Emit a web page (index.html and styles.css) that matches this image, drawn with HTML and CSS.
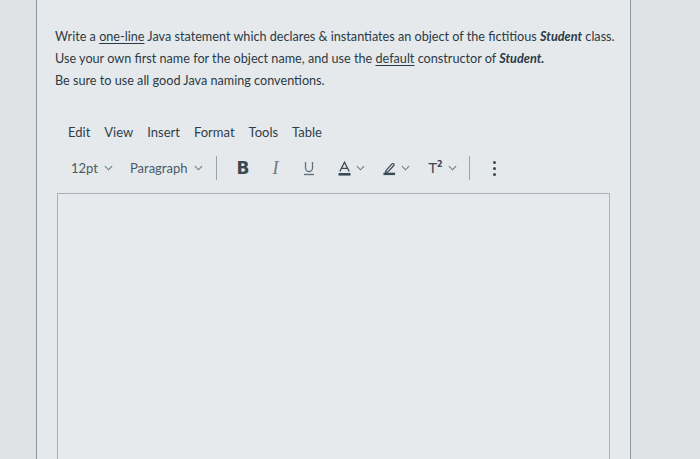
FILE: index.html
```html
<!DOCTYPE html>
<html>
<head>
<meta charset="utf-8">
<link rel="stylesheet" href="styles.css">
</head>
<body>
<div class="page">
  <div class="panel">
    <div class="question">
      <p>Write a <u>one-line</u> Java statement which declares &amp; instantiates an object of the fictitious <b><i>Student</i></b> class.</p>
      <p>Use your own first name for the object name, and use the <u>default</u> constructor of <b><i>Student.</i></b></p>
      <p>Be sure to use all good Java naming conventions.</p>
    </div>
    <div class="editor">
      <div class="menubar">
        <span>Edit</span><span>View</span><span>Insert</span><span>Format</span><span>Tools</span><span>Table</span>
      </div>
      <div class="toolbar">
        <div class="drop"><span>12pt</span><svg class="chev" viewBox="0 0 10 6"><path d="M1 1l4 4 4-4"/></svg></div>
        <div class="drop para"><span>Paragraph</span><svg class="chev" viewBox="0 0 10 6"><path d="M1 1l4 4 4-4"/></svg></div>
        <div class="sep"></div>
        <div class="btn bold">B</div>
        <div class="btn ital">I</div>
        <div class="btn und"><svg viewBox="0 0 12 15" width="12" height="15"><path d="M2.5 1v6a3.5 3.5 0 0 0 7 0V1" fill="none" stroke="#5f707d" stroke-width="1.3"/><path d="M1 13.5h10" stroke="#5f707d" stroke-width="1.4"/></svg></div>
        <div class="btn combo fore"><svg viewBox="0 0 13 15" width="13" height="15"><path d="M1.8 10.5L6.5 1.2l4.7 9.3M3.4 7.4h6.2" fill="none" stroke="#3a4a56" stroke-width="1.3"/><rect x="0.5" y="12" width="12" height="2.6" fill="#3a4a56"/></svg><svg class="chev" viewBox="0 0 10 6"><path d="M1 1l4 4 4-4"/></svg></div>
        <div class="btn combo hl"><svg viewBox="0 0 14 15" width="13" height="15"><path d="M3.2 9.8L9.6 2.6a1.3 1.3 0 0 1 2 1.7L5.3 11.2l-2.6.5z" fill="none" stroke="#3a4a56" stroke-width="1.3"/><rect x="0.5" y="12" width="12.5" height="2.6" fill="#3a4a56"/></svg><svg class="chev" viewBox="0 0 10 6"><path d="M1 1l4 4 4-4"/></svg></div>
        <div class="btn combo sup"><span class="t">T<sup>2</sup></span><svg class="chev" viewBox="0 0 10 6"><path d="M1 1l4 4 4-4"/></svg></div>
        <div class="sep sep2"></div>
        <div class="btn dots"><i></i><i></i><i></i></div>
      </div>
      <div class="area"></div>
    </div>
  </div>
</div>
</body>
</html>
```
FILE: styles.css
```css
html, body {
  margin: 0;
  padding: 0;
  background: #e0e3e6;
  height: 100%;
  overflow: hidden;
}
.page {
  padding-left: 36px;
  height: 459px;
  overflow: hidden;
}
.panel {
  width: 595px;
  height: 459px;
  background: #e6e9ec;
  border-left: 1px solid #8d97a1;
  border-right: 1px solid #8d97a1;
  box-sizing: border-box;
  font-family: Lato, "Liberation Sans", sans-serif;
  color: #2b3a45;
  padding-top: 26px;
  overflow: hidden;
}
.question {
  padding-left: 18px;
  font-size: 12.65px;
  line-height: 22px;
  white-space: nowrap;
}
.question p {
  margin: 0;
}
.question u {
  text-decoration-thickness: 1px;
  text-underline-offset: 2px;
}
.editor {
  margin-top: 31px;
  padding-left: 20px;
  padding-right: 20px;
}
.menubar {
  display: flex;
  gap: 14px;
  padding-left: 11px;
  font-size: 13px;
  line-height: 18px;
  color: #2f3e4a;
}
.toolbar {
  display: flex;
  align-items: center;
  height: 26px;
  margin-top: 14px;
  padding-left: 14px;
  color: #4a5b68;
  font-size: 13px;
}
.drop {
  display: flex;
  align-items: center;
  gap: 6px;
}
.para {
  margin-left: 17px;
}
.chev {
  width: 9px;
  height: 6px;
  fill: none;
  stroke: #6b7a86;
  stroke-width: 1.2;
  flex: none;
}
.sep {
  width: 1px;
  height: 24px;
  background: #9aa4ad;
  margin-left: 13px;
  margin-right: 20px;
}
.btn {
  display: flex;
  align-items: center;
  justify-content: center;
}
.bold {
  font-family: "DejaVu Sans", sans-serif;
  font-weight: bold;
  font-size: 17px;
  color: #3a4852;
  line-height: 1;
}
.ital {
  font-family: "Liberation Serif", serif;
  font-style: italic;
  font-size: 18px;
  color: #6b7985;
  line-height: 1;
  margin-left: 23px;
}
.und {
  margin-left: 25px;
}
.combo {
  gap: 5px;
}
.fore {
  margin-left: 23px;
}
.hl {
  margin-left: 18px;
}
.sup {
  margin-left: 18px;
}
.sup .t {
  font-family: "DejaVu Sans", sans-serif;
  font-size: 14px;
  color: #3a4852;
  line-height: 1;
}
.sup sup {
  font-size: 8px;
  vertical-align: 6px;
  font-weight: bold;
}
.sep2 {
  margin-left: 12px;
  margin-right: 23px;
}
.dots {
  flex-direction: column;
  gap: 3px;
}
.dots i {
  display: block;
  width: 3px;
  height: 3px;
  border-radius: 50%;
  background: #3a4852;
}
.area {
  margin-top: 12px;
  height: 300px;
  border: 1px solid #a9b2ba;
  border-bottom: none;
  background: #e7eaed;
}
```
